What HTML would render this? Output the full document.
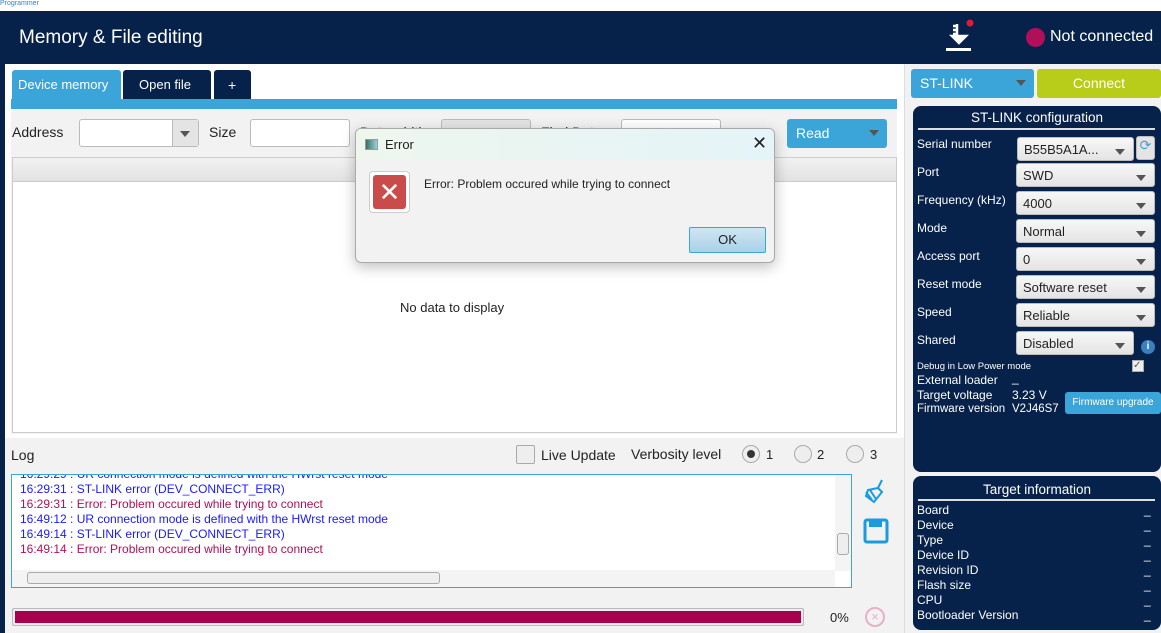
<!DOCTYPE html>
<html><head><style>
*{box-sizing:border-box;margin:0;padding:0}
body{width:1161px;height:633px;overflow:hidden;background:#f2f2f2;font-family:"Liberation Sans",sans-serif;font-size:13px;color:#222;position:relative}
.a{position:absolute;white-space:nowrap}
.dd{position:absolute;background:linear-gradient(#f7f7f7,#e4e4e4);border:1px solid #bbb;border-radius:3px;font-size:13px;color:#222;padding:4px 6px;white-space:nowrap}
.dd:after{content:"";position:absolute;right:8px;top:11px;border:5px solid transparent;border-top:6px solid #555;border-bottom:0}
.lbl{position:absolute;color:#fff;font-size:12px;white-space:nowrap}
.log div{height:15px;line-height:15px;font-size:12px;white-space:nowrap}
.bl{color:#1a1aff}.rd{color:#b0105a}
</style></head><body>
<div class="a" style="left:0;top:0;width:1161px;height:11px;background:#fff"></div>
<div class="a" style="left:0;top:0;font-size:7px;color:#3a7fc0">Programmer</div>
<div class="a" style="left:0;top:11px;width:1161px;height:53px;background:#06224a"></div>
<div class="a" style="left:0;top:64px;width:5px;height:569px;background:#06224a"></div>
<div class="a" style="left:19px;top:27px;font-size:19px;color:#fff">Memory &amp; File editing</div>
<svg class="a" style="left:944px;top:18px" width="32" height="36"><circle cx="26" cy="5" r="3.5" fill="#e8173a"/><path d="M13 6v14M9 8h3M9 12h3M9 16h3M8 18l7 7 7-7z" stroke="#fff" stroke-width="2.5" fill="#fff"/><rect x="2" y="30" width="25" height="3" fill="#fff"/></svg>
<div class="a" style="left:1026px;top:28px;width:19px;height:19px;border-radius:50%;background:#b0105a"></div>
<div class="a" style="left:1050px;top:28px;font-size:16px;color:#fff">Not connected</div>

<div class="a" style="left:5px;top:64px;width:899px;height:569px;background:#fff"></div>
<div class="a" style="left:12px;top:70px;width:109px;height:30px;background:#3ba5d9;border-radius:3px 3px 0 0;color:#fff;font-size:13px;padding:7px 6px">Device memory</div>
<div class="a" style="left:123px;top:70px;width:88px;height:30px;background:#06224a;border-radius:3px 3px 0 0;color:#fff;font-size:13px;padding:7px 16px">Open file</div>
<div class="a" style="left:214px;top:70px;width:37px;height:30px;background:#06224a;border-radius:3px 3px 0 0;color:#fff;font-size:14px;padding:7px 14px">+</div>
<div class="a" style="left:11px;top:99px;width:886px;height:10px;background:#3ba5d9"></div>
<div class="a" style="left:11px;top:109px;width:886px;height:325px;background:#f2f2f2"></div>
<div class="a" style="left:12px;top:124px;font-size:14px">Address</div>
<div class="a" style="left:79px;top:119px;width:120px;height:28px;background:#fff;border:1px solid #bbb;border-radius:3px"></div>
<div class="a" style="left:172px;top:120px;width:26px;height:26px;background:#e4e4e4;border-left:1px solid #bbb"></div>
<div class="a" style="left:180px;top:131px;border:5px solid transparent;border-top:6px solid #555"></div>
<div class="a" style="left:209px;top:124px;font-size:14px">Size</div>
<div class="a" style="left:250px;top:119px;width:100px;height:28px;background:#fff;border:1px solid #bbb;border-radius:3px"></div>
<div class="a" style="left:360px;top:124px;font-size:14px">Data width</div>
<div class="a" style="left:441px;top:119px;width:90px;height:20px;background:#e4e4e4;border:1px solid #bbb;border-radius:3px"></div>
<div class="a" style="left:541px;top:124px;font-size:14px">Find Data</div>
<div class="a" style="left:621px;top:119px;width:100px;height:20px;background:#fff;border:1px solid #bbb;border-radius:3px"></div>
<div class="a" style="left:787px;top:119px;width:100px;height:29px;background:#3ba5d9;border-radius:3px;color:#fff;font-size:14px;padding:6px 9px">Read</div>
<div class="a" style="left:869px;top:130px;border:5px solid transparent;border-top:6px solid #555"></div>
<div class="a" style="left:12px;top:157px;width:885px;height:276px;background:#fff;border:1px solid #ccc"></div>
<div class="a" style="left:13px;top:158px;width:883px;height:24px;background:linear-gradient(#f2f2f2,#e2e2e2);border-bottom:1px solid #ccc"></div>
<div class="a" style="left:400px;top:300px;font-size:13px">No data to display</div>

<div class="a" style="left:5px;top:438px;width:899px;height:195px;background:#f2f2f2"></div>
<div class="a" style="left:11px;top:447px;font-size:14px">Log</div>
<div class="a" style="left:516px;top:445px;width:19px;height:19px;border:1px solid #aaa;border-radius:2px;background:#eee"></div>
<div class="a" style="left:541px;top:447px;font-size:14px">Live Update</div>
<div class="a" style="left:631px;top:446px;font-size:14px">Verbosity level</div>
<div class="a" style="left:742px;top:445px;width:18px;height:18px;border-radius:50%;border:1px solid #aaa;background:#eee"></div>
<div class="a" style="left:747px;top:450px;width:8px;height:8px;border-radius:50%;background:#333"></div>
<div class="a" style="left:766px;top:447px;font-size:13px">1</div>
<div class="a" style="left:794px;top:445px;width:18px;height:18px;border-radius:50%;border:1px solid #aaa;background:#eee"></div>
<div class="a" style="left:817px;top:447px">2</div>
<div class="a" style="left:846px;top:445px;width:18px;height:18px;border-radius:50%;border:1px solid #aaa;background:#eee"></div>
<div class="a" style="left:870px;top:447px">3</div>
<div class="a log" style="left:11px;top:474px;width:841px;height:114px;background:#fff;border:1px solid #3ba5d9;padding-left:8px;overflow:hidden">
<div class="bl" style="margin-top:-8px">16:29:29 : UR connection mode is defined with the HWrst reset mode</div>
<div class="bl">16:29:31 : ST-LINK error (DEV_CONNECT_ERR)</div>
<div class="rd">16:29:31 : Error: Problem occured while trying to connect</div>
<div class="bl">16:49:12 : UR connection mode is defined with the HWrst reset mode</div>
<div class="bl">16:49:14 : ST-LINK error (DEV_CONNECT_ERR)</div>
<div class="rd">16:49:14 : Error: Problem occured while trying to connect</div>
</div>
<div class="a" style="left:835px;top:475px;width:16px;height:96px;background:#f4f4f4"></div>
<div class="a" style="left:837px;top:533px;width:12px;height:22px;border:1px solid #aaa;border-radius:3px;background:#eee"></div>
<div class="a" style="left:12px;top:570px;width:823px;height:17px;background:#f4f4f4"></div>
<div class="a" style="left:27px;top:572px;width:413px;height:12px;border:1px solid #aaa;border-radius:3px;background:#eee"></div>
<svg class="a" style="left:862px;top:478px" width="28" height="70"><path d="M20 2l-4 8M6 12l10-2 4 4-8 10-8-6z M4 14l6 8M8 12l6 9" stroke="#1b9ae0" stroke-width="2" fill="none"/><rect x="3" y="42" width="22" height="22" rx="2" stroke="#1b9ae0" stroke-width="3" fill="none"/><rect x="7" y="43" width="13" height="6" fill="#1b9ae0"/></svg>
<div class="a" style="left:12px;top:608px;width:792px;height:18px;border:1px solid #bbb;border-radius:2px;background:#a8004f;box-shadow:inset 0 0 0 2px #eee"></div>
<div class="a" style="left:830px;top:610px;font-size:13px">0%</div>
<div class="a" style="left:865px;top:607px;width:20px;height:20px;border-radius:50%;border:2px solid #e8b0c8;color:#e8b0c8;font-size:13px;text-align:center;line-height:16px">×</div>

<div class="a" style="left:904px;top:64px;width:257px;height:569px;background:#f2f2f2;border-left:1px solid #ddd"></div>
<div class="a" style="left:911px;top:69px;width:123px;height:29px;background:#3ba5d9;border-radius:3px;color:#fff;font-size:14px;padding:6px 9px">ST-LINK</div>
<div class="a" style="left:1016px;top:80px;border:5px solid transparent;border-top:6px solid #555"></div>
<div class="a" style="left:1037px;top:69px;width:124px;height:29px;background:#b8cc1a;border-radius:3px;color:#fff;font-size:14px;padding:6px 0;text-align:center">Connect</div>
<div class="a" style="left:913px;top:106px;width:248px;height:366px;background:#06224a;border-radius:8px"></div>
<div class="a" style="left:913px;top:110px;width:248px;text-align:center;color:#fff;font-size:13.5px">ST-LINK configuration</div>
<div class="a" style="left:918px;top:128px;width:237px;height:2px;background:#ddd"></div>
<div class="lbl" style="left:917px;top:137px">Serial number</div>
<div class="dd" style="left:1017px;top:137px;width:117px;height:24px">B55B5A1A...</div>
<div class="a" style="left:1136px;top:136px;width:19px;height:24px;background:#e4e4e4;border:1px solid #bbb;border-radius:3px;color:#3ba5d9;font-size:14px;text-align:center">⟳</div>
<div class="lbl" style="left:917px;top:165px">Port</div><div class="dd" style="left:1016px;top:163px;width:139px;height:24px">SWD</div>
<div class="lbl" style="left:917px;top:193px">Frequency (kHz)</div><div class="dd" style="left:1016px;top:191px;width:139px;height:24px">4000</div>
<div class="lbl" style="left:917px;top:221px">Mode</div><div class="dd" style="left:1016px;top:219px;width:139px;height:24px">Normal</div>
<div class="lbl" style="left:917px;top:249px">Access port</div><div class="dd" style="left:1016px;top:247px;width:139px;height:24px">0</div>
<div class="lbl" style="left:917px;top:277px">Reset mode</div><div class="dd" style="left:1016px;top:275px;width:139px;height:24px">Software reset</div>
<div class="lbl" style="left:917px;top:305px">Speed</div><div class="dd" style="left:1016px;top:303px;width:139px;height:24px">Reliable</div>
<div class="lbl" style="left:917px;top:333px">Shared</div><div class="dd" style="left:1016px;top:331px;width:118px;height:24px">Disabled</div>
<div class="a" style="left:1141px;top:340px;width:14px;height:14px;border-radius:50%;background:#3a7fc0;color:#fff;font-size:10px;font-weight:bold;text-align:center;line-height:14px">i</div>
<div class="lbl" style="left:917px;top:361px;font-size:9.5px">Debug in Low Power mode</div>
<div class="a" style="left:1132px;top:360px;width:12px;height:12px;background:#eee;border:1px solid #aaa;font-size:10px;line-height:10px;color:#555">✓</div>
<div class="lbl" style="left:917px;top:373px">External loader</div><div class="lbl" style="left:1012px;top:371px">_</div>
<div class="lbl" style="left:917px;top:388px">Target voltage</div><div class="lbl" style="left:1012px;top:388px">3.23 V</div>
<div class="lbl" style="left:917px;top:403px;font-size:11.5px">Firmware version</div><div class="lbl" style="left:1012px;top:403px;font-size:11.5px">V2J46S7</div>
<div class="a" style="left:1065px;top:392px;width:96px;height:22px;background:#3ba5d9;border-radius:3px;color:#fff;font-size:10px;text-align:center;line-height:22px">Firmware upgrade</div>

<div class="a" style="left:913px;top:476px;width:248px;height:154px;background:#06224a;border-radius:8px"></div>
<div class="a" style="left:913px;top:482px;width:248px;text-align:center;color:#fff;font-size:13.5px">Target information</div>
<div class="a" style="left:918px;top:499px;width:237px;height:2px;background:#ddd"></div>
<div class="lbl" style="left:917px;top:503px">Board</div><div class="lbl" style="left:1144px;top:503px">_</div>
<div class="lbl" style="left:917px;top:518px">Device</div><div class="lbl" style="left:1144px;top:518px">_</div>
<div class="lbl" style="left:917px;top:533px">Type</div><div class="lbl" style="left:1144px;top:533px">_</div>
<div class="lbl" style="left:917px;top:548px">Device ID</div><div class="lbl" style="left:1144px;top:548px">_</div>
<div class="lbl" style="left:917px;top:563px">Revision ID</div><div class="lbl" style="left:1144px;top:563px">_</div>
<div class="lbl" style="left:917px;top:578px">Flash size</div><div class="lbl" style="left:1144px;top:578px">_</div>
<div class="lbl" style="left:917px;top:593px">CPU</div><div class="lbl" style="left:1144px;top:593px">_</div>
<div class="lbl" style="left:917px;top:608px">Bootloader Version</div><div class="lbl" style="left:1144px;top:608px">_</div>

<div class="a" style="left:355px;top:128px;width:420px;height:135px;background:#f2f2f2;border:1px solid #aaa;border-radius:6px;box-shadow:0 4px 14px rgba(0,0,0,.25);overflow:hidden">
<div style="height:31px;background:linear-gradient(90deg,#eef6ee,#e4f4f8);position:relative">
<div class="a" style="left:9px;top:10px;width:13px;height:11px;border:1px solid #999;background:linear-gradient(90deg,#3a7060,#9ccfe0)"></div>
<div class="a" style="left:29px;top:8px;font-size:13px">Error</div>
<div class="a" style="left:396px;top:4px;font-size:18px">✕</div></div>
<div class="a" style="left:13px;top:42px;width:41px;height:42px;border:1px solid #ccc;border-radius:4px;background:#fff;padding:3px"><div style="width:33px;height:34px;background:#c94c4a;border-radius:3px;color:#fff;font-size:26px;text-align:center;line-height:34px">✕</div></div>
<div class="a" style="left:68px;top:48px;font-size:12px">Error: Problem occured while trying to connect</div>
<div class="a" style="left:333px;top:98px;width:77px;height:26px;border:1px solid #3ba5d9;border-radius:2px;background:linear-gradient(#cfe6f3,#a9d1e8);text-align:center;line-height:24px;font-size:13px">OK</div>
</div>
</body></html>
